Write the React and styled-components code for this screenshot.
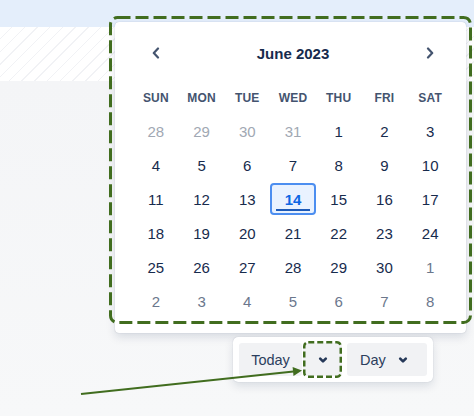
import React from "react";
import styled, { createGlobalStyle } from "styled-components";

const GlobalStyle = createGlobalStyle`
  html, body {
    margin: 0;
    padding: 0;
    background: #f4f5f7;
  }
  body {
    font-family: "Liberation Sans", Arial, sans-serif;
    color: #172b4d;
  }
`;

const Page = styled.div`
  position: relative;
  width: 474px;
  height: 416px;
  overflow: hidden;
  display: flex;
  flex-direction: column;
  background: #f4f5f7;
`;

const TopBand = styled.div`
  height: 27px;
  background: #e4eefb;
`;

const StripeBand = styled.div`
  height: 54px;
  background-color: #fff;
  background-image: repeating-linear-gradient(
    135deg,
    #fff 0px,
    #fff 8px,
    #f1f2f5 8px,
    #f1f2f5 9px
  );
`;

const Filler = styled.div`
  flex: 1;
  background: linear-gradient(#f4f5f7, #f7f8f9);
`;

const PopupLayer = styled.div`
  position: absolute;
  left: 115px;
  top: 22px;
  display: flex;
  flex-direction: column;
  align-items: flex-end;
  gap: 4px;
`;

const Card = styled.div`
  box-sizing: border-box;
  width: 351px;
  height: 311px;
  padding: 16px 13px 15px 18px;
  background: #fff;
  border-radius: 4px;
  box-shadow: 0 4px 10px rgba(9, 30, 66, 0.13), 0 0 1px rgba(9, 30, 66, 0.3);
`;

const Header = styled.div`
  display: grid;
  grid-template-columns: repeat(7, 1fr);
  height: 30px;
  align-items: center;
`;

const NavButton = styled.button`
  display: flex;
  align-items: center;
  justify-content: center;
  height: 30px;
  border: 0;
  background: transparent;
  padding: 0;
  color: #44546f;
`;

const Title = styled.div`
  grid-column: 2 / 7;
  text-align: center;
  font-size: 15px;
  font-weight: 700;
  color: #172b4d;
`;

const Weekdays = styled.div`
  display: grid;
  grid-template-columns: repeat(7, 1fr);
  height: 35px;
  margin-top: 12px;
  align-items: center;
`;

const Weekday = styled.div`
  text-align: center;
  font-size: 12px;
  font-weight: 700;
  color: #44546f;
  letter-spacing: 0.2px;
`;

const Days = styled.div`
  display: grid;
  grid-template-columns: repeat(7, 1fr);
  grid-auto-rows: 32px;
  row-gap: 2px;
`;

const Day = styled.div`
  position: relative;
  box-sizing: border-box;
  display: flex;
  align-items: center;
  justify-content: center;
  font-size: 15px;
  border-radius: 4px;
  color: ${(p) =>
    p.$muted === "prev" ? "#a1a8b3" : p.$muted === "next" ? "#6b778c" : "#172b4d"};
  ${(p) =>
    p.$selected &&
    `
    background: #e9f2ff;
    border: 2px solid #4c8ef0;
    color: #0c66e4;
    font-weight: 700;
    &::after {
      content: "";
      position: absolute;
      left: 4px;
      right: 4px;
      bottom: 2px;
      height: 2px;
      background: #1d5ab8;
    }
  `}
`;

const Toolbar = styled.div`
  box-sizing: border-box;
  margin-right: 33px;
  width: 200px;
  height: 45px;
  padding: 6px;
  display: flex;
  background: #fff;
  border-radius: 5px;
  box-shadow: 0 4px 10px rgba(9, 30, 66, 0.12), 0 0 1px rgba(9, 30, 66, 0.25);
`;

const ToolButton = styled.button`
  box-sizing: border-box;
  width: ${(p) => p.$w}px;
  margin-left: ${(p) => p.$ml || 0}px;
  height: 33px;
  border: 0;
  border-radius: 3px;
  background: #f1f2f4;
  display: flex;
  align-items: center;
  justify-content: ${(p) => (p.$start ? "flex-start" : "center")};
  padding: ${(p) => (p.$start ? "0 0 0 13px" : "0")};
  gap: 12px;
  font-family: "Liberation Sans", Arial, sans-serif;
  font-size: 14.5px;
  color: #2c3e5d;
`;

const Annotations = styled.svg`
  position: absolute;
  left: 0;
  top: 0;
  pointer-events: none;
`;

const ChevronLeft = () => (
  <svg width="10" height="12" viewBox="0 0 10 12">
    <path d="M7 1.5 L2.8 6 L7 10.5" fill="none" stroke="currentColor" strokeWidth="2.2" strokeLinecap="round" strokeLinejoin="round" />
  </svg>
);

const ChevronRight = () => (
  <svg width="10" height="12" viewBox="0 0 10 12">
    <path d="M3 1.5 L7.2 6 L3 10.5" fill="none" stroke="currentColor" strokeWidth="2.2" strokeLinecap="round" strokeLinejoin="round" />
  </svg>
);

const ChevronDown = () => (
  <svg width="10" height="8" viewBox="0 0 10 8">
    <path d="M2.2 2.6 L5 5.4 L7.8 2.6" fill="none" stroke="#253858" strokeWidth="2.6" strokeLinecap="round" strokeLinejoin="round" />
  </svg>
);

const weekdays = ["SUN", "MON", "TUE", "WED", "THU", "FRI", "SAT"];

const buildDays = () => {
  const days = [];
  [28, 29, 30, 31].forEach((d) => days.push({ d, muted: "prev" }));
  for (let d = 1; d <= 30; d++) days.push({ d });
  for (let d = 1; d <= 8; d++) days.push({ d, muted: "next" });
  return days;
};

export default function App() {
  const days = buildDays();
  return (
    <>
      <GlobalStyle />
      <Page>
        <TopBand />
        <StripeBand />
        <Filler />

        <PopupLayer>
          <Card>
            <Header>
              <NavButton aria-label="Previous month">
                <ChevronLeft />
              </NavButton>
              <Title>June 2023</Title>
              <NavButton aria-label="Next month">
                <ChevronRight />
              </NavButton>
            </Header>
            <Weekdays>
              {weekdays.map((w) => (
                <Weekday key={w}>{w}</Weekday>
              ))}
            </Weekdays>
            <Days>
              {days.map((item, i) => (
                <Day key={i} $muted={item.muted} $selected={!item.muted && item.d === 14}>
                  {item.d}
                </Day>
              ))}
            </Days>
          </Card>

          <Toolbar>
            <ToolButton $w={63}>Today</ToolButton>
            <ToolButton $w={39} $ml={1} aria-label="More">
              <ChevronDown />
            </ToolButton>
            <ToolButton $w={80} $ml={5} $start>
              Day
              <ChevronDown />
            </ToolButton>
          </Toolbar>
        </PopupLayer>

        <Annotations width="474" height="416" viewBox="0 0 474 416">
          <rect x="110.5" y="17.5" width="360" height="305" rx="7" fill="none" stroke="#416d1f" strokeWidth="3" strokeDasharray="13 5" />
          <rect x="304.25" y="342.25" width="36.5" height="34.5" rx="4" fill="none" stroke="#416d1f" strokeWidth="2.5" strokeDasharray="6 3" />
          <line x1="81" y1="394" x2="293.5" y2="371.4" stroke="#416d1f" strokeWidth="2" />
          <polygon points="302,370.5 293.5,375.9 292.6,367" fill="#416d1f" />
        </Annotations>
      </Page>
    </>
  );
}
